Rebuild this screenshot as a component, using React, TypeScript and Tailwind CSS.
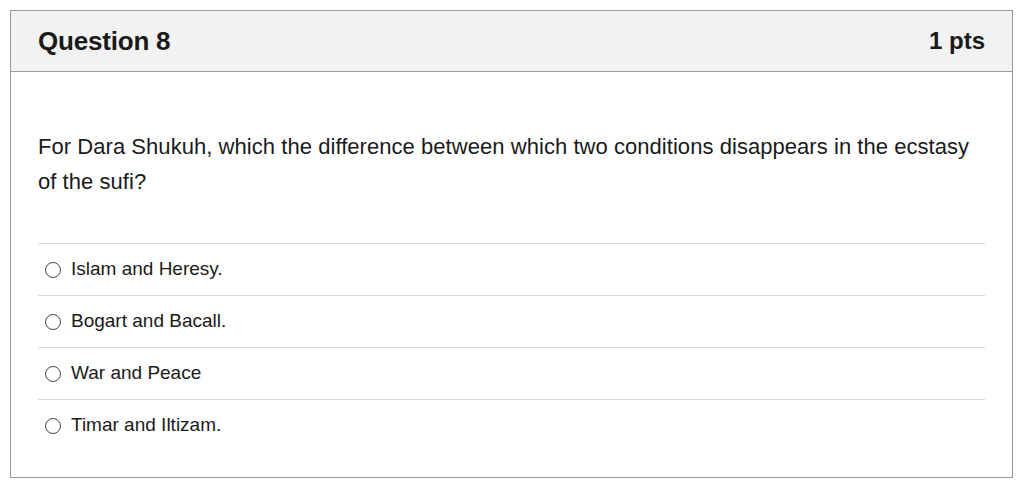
const ANSWERS = [
  "Islam and Heresy.",
  "Bogart and Bacall.",
  "War and Peace",
  "Timar and Iltizam.",
];

export default function App() {
  return (
    <div className="min-h-screen bg-white pt-[10px] pl-[10px] font-['Liberation_Sans',Arial,sans-serif] text-[#1a1a1a]">
      <div className="w-[1003px] h-[468px] border border-[#9b9b9b]">
        {/* Header */}
        <div className="h-[61px] bg-[#f2f2f2] border-b border-[#9b9b9b] px-[27px] flex items-center justify-between">
          <h2 className="text-[26px] font-bold leading-none tracking-[-0.2px]">Question 8</h2>
          <span className="text-[24px] font-bold leading-none">1 pts</span>
        </div>

        {/* Body */}
        <div className="px-[27px] pt-[57px]">
          <p className="text-[22px] leading-[35px] pr-[8px] tracking-[0.05px]">
            For Dara Shukuh, which the difference between which two conditions disappears in the ecstasy of the sufi?
          </p>
          <div className="mt-[44px]">
            {ANSWERS.map((a) => (
              <label
                key={a}
                className="h-[52px] border-t border-[#d9d9d9] flex items-center gap-[10px] pl-[7px] text-[19px]"
              >
                <span className="w-[16px] h-[16px] rounded-full border-[1.5px] border-[#444] bg-white" />
                {a}
              </label>
            ))}
          </div>
        </div>
      </div>
    </div>
  );
}
